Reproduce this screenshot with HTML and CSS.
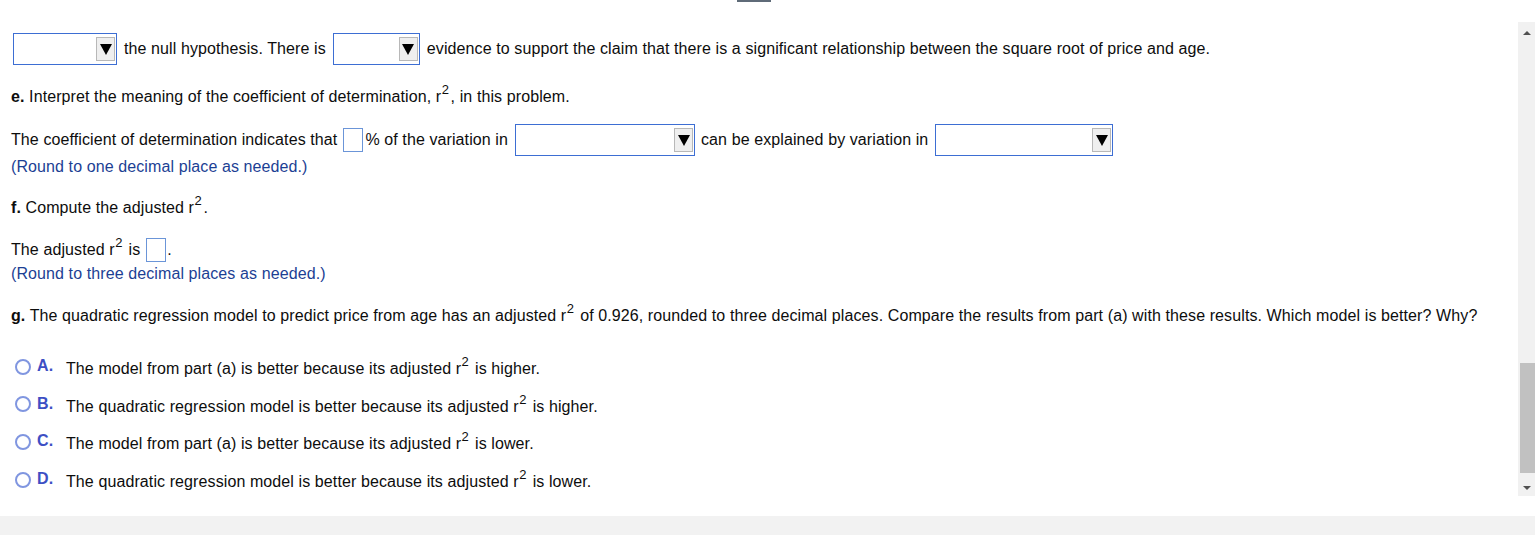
FILE: index.html
```html
<!DOCTYPE html>
<html>
<head>
<meta charset="utf-8">
<link rel="stylesheet" href="styles.css">
</head>
<body>
<div class="page">
  <div class="topmark"></div>
  <div class="pane">
    <div class="content">
      <div class="line row1">
        <span class="dd dd-1"><span class="dd-btn"><span class="tri"></span></span></span>
        <span class="txt">the null hypothesis. There is</span>
        <span class="dd dd-2"><span class="dd-btn"><span class="tri"></span></span></span>
        <span class="txt">evidence to support the claim that there is a significant relationship between the square root of price and age.</span>
      </div>

      <p class="line q-e"><b>e.</b> Interpret the meaning of the coefficient of determination, r<sup class="sq">2</sup>, in this problem.</p>

      <div class="line row-coef">
        <span class="txt">The coefficient of determination indicates that</span>
        <span class="box box-coef"></span>
        <span class="txt pct">% of the variation in</span>
        <span class="dd dd-3"><span class="dd-btn"><span class="tri"></span></span></span>
        <span class="txt">can be explained by variation in</span>
        <span class="dd dd-4"><span class="dd-btn"><span class="tri"></span></span></span>
      </div>
      <p class="line note note-1">(Round to one decimal place as needed.)</p>

      <p class="line q-f"><b>f.</b> Compute the adjusted r<sup class="sq">2</sup>.</p>

      <div class="line row-adj">
        <span class="txt">The adjusted r<sup class="sq">2</sup> is</span>
        <span class="box box-adj"></span><span class="txt dot">.</span>
      </div>
      <p class="line note note-2">(Round to three decimal places as needed.)</p>

      <p class="line q-g"><b>g.</b> The quadratic regression model to predict price from age has an adjusted r<sup class="sq">2</sup> of 0.926, rounded to three decimal places. Compare the results from part (a) with these results. Which model is better? Why?</p>

      <div class="options">
        <div class="opt"><span class="radio"></span><span class="letter">A.</span><span class="otext">The model from part (a) is better because its adjusted r<sup class="sq">2</sup> is higher.</span></div>
        <div class="opt"><span class="radio"></span><span class="letter">B.</span><span class="otext">The quadratic regression model is better because its adjusted r<sup class="sq">2</sup> is higher.</span></div>
        <div class="opt"><span class="radio"></span><span class="letter">C.</span><span class="otext">The model from part (a) is better because its adjusted r<sup class="sq">2</sup> is lower.</span></div>
        <div class="opt"><span class="radio"></span><span class="letter">D.</span><span class="otext">The quadratic regression model is better because its adjusted r<sup class="sq">2</sup> is lower.</span></div>
      </div>
    </div>
    <div class="scrollbar">
      <div class="sb-up"><span class="arrow-up"></span></div>
      <div class="sb-track"><div class="sb-thumb"></div></div>
      <div class="sb-down"><span class="arrow-down"></span></div>
    </div>
  </div>
  <div class="footer"></div>
</div>
</body>
</html>
```
FILE: styles.css
```css
html, body {
  margin: 0;
  padding: 0;
  background: #ffffff;
}
body {
  font-family: "Liberation Sans", Arial, sans-serif;
  font-size: 16px;
  letter-spacing: 0.1px;
  color: #0d0d0d;
  overflow: hidden;
}
.page {
  position: relative;
  width: 1535px;
  height: 535px;
}
.topmark {
  position: absolute;
  left: 737px;
  top: 0;
  width: 34px;
  height: 2px;
  background: #5f6b78;
}
.pane {
  display: flex;
  height: 516px;
}
.content {
  flex: 1;
  padding-left: 11px;
  padding-top: 33px;
  box-sizing: border-box;
}
.line {
  margin: 0;
  line-height: 20px;
  white-space: nowrap;
}
.row1 {
  display: flex;
  align-items: center;
  height: 32px;
}
.row1 .dd-1 { margin-left: 2px; margin-right: 7px; }
.row1 .dd-2 { margin-left: 7px; margin-right: 7px; }
.q-e { margin-top: 22px; }
.row-coef {
  display: flex;
  align-items: center;
  height: 32px;
  margin-top: 17px;
}
.box {
  display: inline-block;
  box-sizing: border-box;
  width: 20px;
  height: 24px;
  border: 1px solid #6b95d8;
  background: #fff;
}
.box-coef { margin-left: 6px; margin-right: 2px; }
.row-coef .dd-3 { margin-left: 7px; margin-right: 6px; }
.row-coef .dd-4 { margin-left: 7px; }
.note { color: #1c3f94; }
.note-1 { margin-top: 1px; }
.q-f { margin-top: 21px; }
.row-adj {
  display: flex;
  align-items: center;
  height: 24px;
  margin-top: 20px;
}
.box-adj { margin-left: 6px; margin-right: 1px; }
.note-2 { margin-top: 2px; }
.q-g { margin-top: 22px; }

.sq {
  font-size: 13px;
  line-height: 0;
  vertical-align: 8px;
  margin-left: 0.5px;
  margin-right: 1.5px;
}

.dd {
  display: inline-flex;
  justify-content: flex-end;
  align-items: center;
  box-sizing: border-box;
  height: 32px;
  border: 1px solid #3d6ed3;
  background: #fff;
  padding-right: 1px;
}
.dd-1 { width: 104px; }
.dd-2 { width: 87px; }
.dd-3 { width: 180px; }
.dd-4 { width: 178px; }
.dd-btn {
  display: flex;
  align-items: center;
  justify-content: center;
  box-sizing: border-box;
  width: 19px;
  height: 24px;
  border: 1px solid #b8b8b8;
  background: #efefef;
}
.tri {
  width: 0;
  height: 0;
  border-left: 6px solid transparent;
  border-right: 6px solid transparent;
  border-top: 11px solid #000;
}

.options {
  margin-top: 33px;
  display: flex;
  flex-direction: column;
  gap: 17.7px;
}
.opt {
  display: flex;
  align-items: center;
  height: 20px;
  padding-left: 4px;
  line-height: 20px;
}
.radio {
  width: 16px;
  height: 16px;
  box-sizing: border-box;
  border: 2px solid #8096e0;
  border-radius: 50%;
  margin-top: -5px;
}
.letter {
  font-weight: bold;
  color: #3d4fc4;
  margin-left: 6px;
  width: 29px;
  position: relative;
  top: -3px;
}

.scrollbar {
  width: 17px;
  margin-top: 22px;
  height: 474px;
  background: #f1f1f1;
  display: flex;
  flex-direction: column;
}
.sb-up, .sb-down {
  height: 17px;
  display: flex;
  align-items: center;
  justify-content: center;
}
.sb-up { padding-top: 5px; height: 12px; }
.sb-track {
  flex: 1;
  display: flex;
  flex-direction: column;
  justify-content: flex-end;
  padding-bottom: 6px;
}
.sb-thumb {
  margin-left: 2px;
  height: 110px;
  background: #c1c1c1;
}
.arrow-up {
  width: 0;
  height: 0;
  border-left: 4px solid transparent;
  border-right: 4px solid transparent;
  border-bottom: 4px solid #505050;
}
.arrow-down {
  width: 0;
  height: 0;
  border-left: 4px solid transparent;
  border-right: 4px solid transparent;
  border-top: 4px solid #505050;
}
.footer {
  height: 19px;
  background: #f2f2f2;
}
```
